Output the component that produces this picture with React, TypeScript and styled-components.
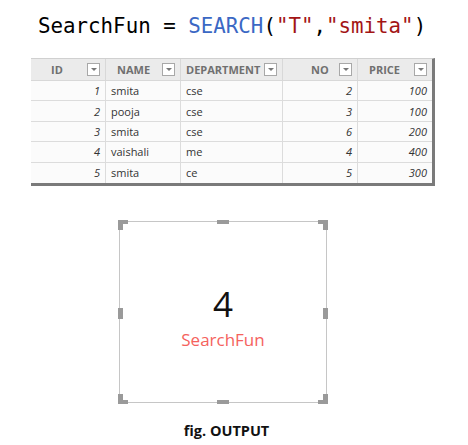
import React from "react";
import styled, { createGlobalStyle } from "styled-components";

const Global = createGlobalStyle`
  html, body { margin: 0; padding: 0; background: #ffffff; }
  body { width: 468px; height: 445px; overflow: hidden; }
`;

const Page = styled.div`
  display: flex;
  flex-direction: column;
  width: 468px;
`;

const Formula = styled.div`
  margin: 14px 0 0 38px;
  font-family: "DejaVu Sans Mono", "Liberation Mono", monospace;
  font-size: 20.8px;
  line-height: 24px;
  color: #000;
  white-space: pre;
`;

const Fn = styled.span`
  color: #3b68c4;
`;
const Str = styled.span`
  color: #a31515;
`;

const TableWrap = styled.div`
  margin: 20px 0 0 31px;
  width: 401px;
  border-right: 3px solid #7a7a7a;
  border-bottom: 3px solid #7a7a7a;
  border-top: 1px solid #d0d0d0;
  font-family: "Open Sans", "Noto Sans", sans-serif;
  font-size: 11px;
`;

const Grid = styled.div`
  display: grid;
  grid-template-columns: 74px 75px 102px 75px 75px;
`;

const HeadCell = styled.div<{ $first?: boolean }>`
  height: 22px;
  background: #ebebeb;
  border-left: ${(p) => (p.$first ? "none" : "1px solid #d8d8d8")};
  border-bottom: 1px solid #d8d8d8;
  display: flex;
  align-items: center;
  justify-content: space-between;
  padding: 0 5px 0 0;
  box-sizing: border-box;
  color: #707070;
  font-weight: 700;
`;

const HeadLabel = styled.span<{ $indent: number }>`
  padding-left: ${(p) => p.$indent}px;
`;

const Drop = styled.span`
  width: 11px;
  height: 11px;
  border: 1px solid #a8a8a8;
  background: #fff;
  display: flex;
  align-items: center;
  justify-content: center;
`;

const Cell = styled.div<{ $num?: boolean; $first?: boolean }>`
  height: 20.4px;
  background: #fbfbfb;
  border-left: ${(p) => (p.$first ? "none" : "1px solid #dcdcdc")};
  border-bottom: 1px solid #dcdcdc;
  box-sizing: border-box;
  display: flex;
  align-items: center;
  justify-content: ${(p) => (p.$num ? "flex-end" : "flex-start")};
  padding: ${(p) => (p.$num ? "0 5px 0 0" : "0 0 0 5px")};
  font-style: ${(p) => (p.$num ? "italic" : "normal")};
  color: #333;
`;

const LastCell = styled(Cell)`
  border-bottom: none;
`;

const FigureArea = styled.div`
  margin: 35px 0 0 119px;
  display: flex;
  flex-direction: column;
  align-items: center;
  width: 208px;
`;

const Card = styled.div`
  position: relative;
  width: 208px;
  height: 182px;
  border: 1px solid #c6c6c6;
  box-sizing: border-box;
  display: flex;
  flex-direction: column;
  align-items: center;
  justify-content: center;
  font-family: "Open Sans", "Noto Sans", sans-serif;
`;

const Value = styled.div`
  font-size: 35px;
  line-height: 40px;
  color: #111;
  margin-top: 12px;
`;

const Label = styled.div`
  font-size: 17px;
  line-height: 22px;
  color: #f5625d;
  margin-top: 5px;
`;

const Handle = styled.span<{ $w: number; $h: number }>`
  position: absolute;
  width: ${(p) => p.$w}px;
  height: ${(p) => p.$h}px;
  background: #9a9a9a;
`;

const Corner = styled.span`
  position: absolute;
  width: 10px;
  height: 10px;
  border-style: solid;
  border-color: #9a9a9a;
  box-sizing: border-box;
`;

const Caption = styled.div`
  margin-top: 18px;
  font-family: "Open Sans", "Noto Sans", sans-serif;
  font-weight: 700;
  font-size: 14.5px;
  line-height: 20px;
  color: #111;
  margin-left: 7px;
`;

const cols = [
  { name: "ID", indent: 20, num: true },
  { name: "NAME", indent: 11, num: false },
  { name: "DEPARTMENT", indent: 5, num: false },
  { name: "NO", indent: 28, num: true },
  { name: "PRICE", indent: 11, num: true },
];

const rows = [
  ["1", "smita", "cse", "2", "100"],
  ["2", "pooja", "cse", "3", "100"],
  ["3", "smita", "cse", "6", "200"],
  ["4", "vaishali", "me", "4", "400"],
  ["5", "smita", "ce", "5", "300"],
];

const Arrow = () => (
  <svg width="6" height="3" viewBox="0 0 6 3">
    <path d="M0 0 L6 0 L3 3 Z" fill="#777" />
  </svg>
);

export default function App() {
  return (
    <Page>
      <Global />
      <Formula>
        SearchFun = <Fn>SEARCH</Fn>(<Str>"T"</Str>,<Str>"smita"</Str>)
      </Formula>
      <TableWrap>
        <Grid>
          {cols.map((c, i) => (
            <HeadCell key={c.name} $first={i === 0}>
              <HeadLabel $indent={c.indent}>{c.name}</HeadLabel>
              <Drop>
                <Arrow />
              </Drop>
            </HeadCell>
          ))}
          {rows.map((r, ri) =>
            r.map((v, ci) => {
              const C = ri === rows.length - 1 ? LastCell : Cell;
              return (
                <C key={`${ri}-${ci}`} $num={cols[ci].num} $first={ci === 0}>
                  {v}
                </C>
              );
            })
          )}
        </Grid>
      </TableWrap>
      <FigureArea>
        <Card>
          <Corner style={{ left: -2, top: -2, borderWidth: "4px 0 0 5px" }} />
          <Corner style={{ right: -2, top: -2, borderWidth: "4px 5px 0 0" }} />
          <Corner style={{ left: -2, bottom: -2, borderWidth: "0 0 4px 5px" }} />
          <Corner style={{ right: -2, bottom: -2, borderWidth: "0 5px 4px 0" }} />
          <Handle $w={12} $h={4} style={{ left: 97, top: -2 }} />
          <Handle $w={12} $h={4} style={{ left: 97, bottom: -2 }} />
          <Handle $w={5} $h={11} style={{ left: -2, top: 86 }} />
          <Handle $w={5} $h={11} style={{ right: -2, top: 86 }} />
          <Value>4</Value>
          <Label>SearchFun</Label>
        </Card>
        <Caption>fig. OUTPUT</Caption>
      </FigureArea>
    </Page>
  );
}
